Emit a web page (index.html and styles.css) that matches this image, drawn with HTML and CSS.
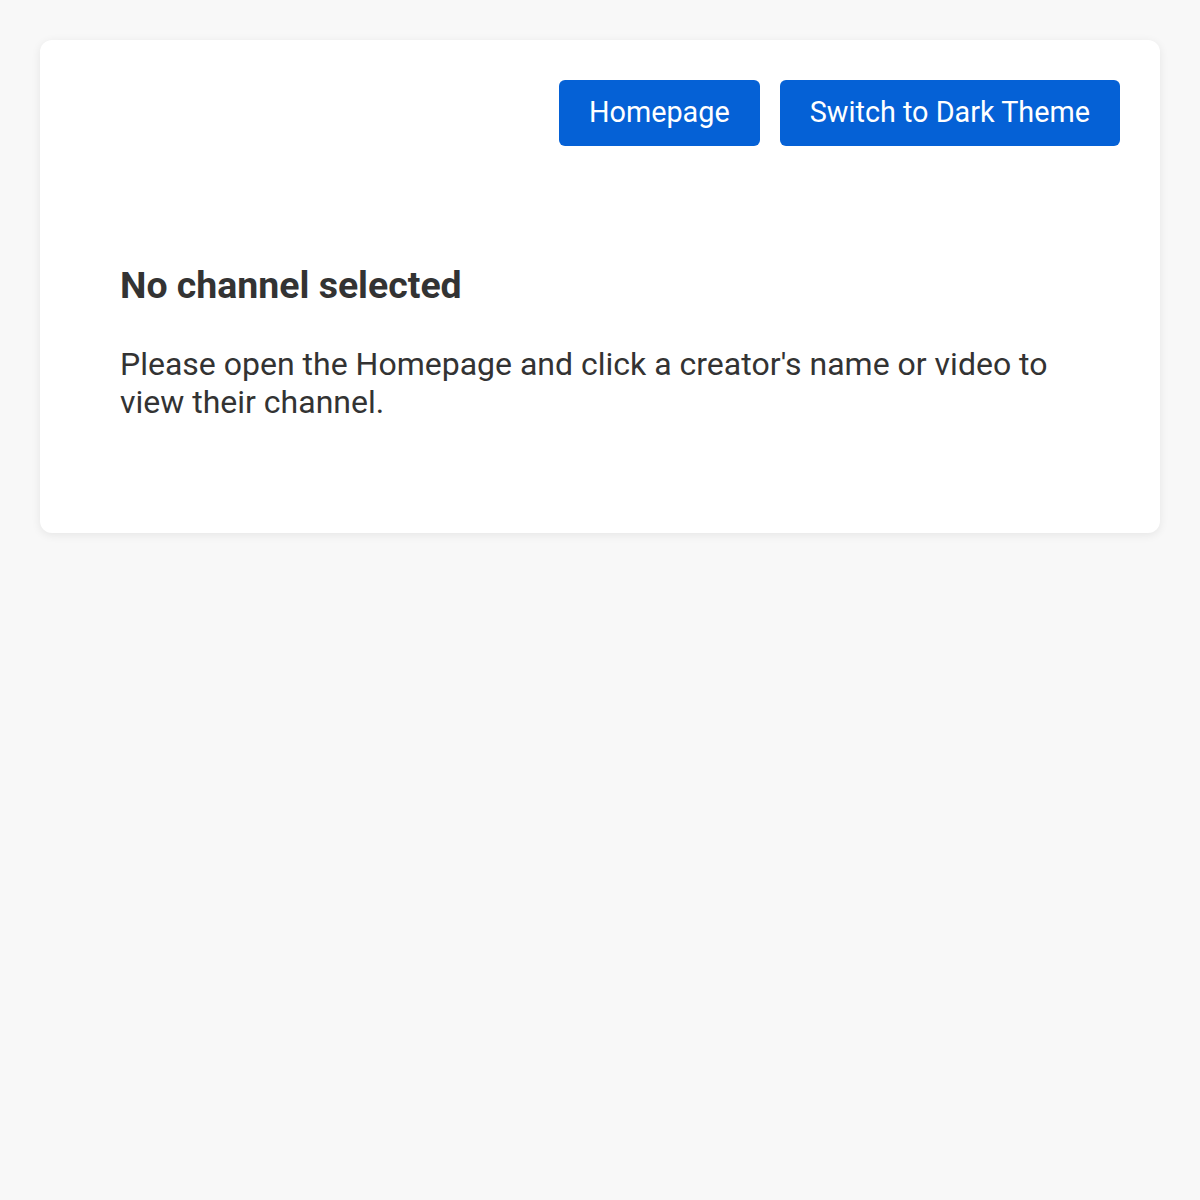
FILE: index.html
```html
<!DOCTYPE html>
<html lang="en">
<head>
<meta charset="utf-8">
<title>Channel</title>
<link rel="stylesheet" href="styles.css">
</head>
<body>
<div class="card">
  <div class="toolbar">
    <button class="btn">Homepage</button>
    <button class="btn">Switch to Dark Theme</button>
  </div>
  <div class="empty">
    <h3 class="empty-title">No channel selected</h3>
    <p class="empty-text">Please open the Homepage and click a creator's name or video to view their channel.</p>
  </div>
</div>
</body>
</html>
```
FILE: styles.css
```css
html, body {
  margin: 0;
  padding: 0;
  background: #f8f8f8;
}
body {
  padding: 40px;
  font-family: Roboto, "Liberation Sans", sans-serif;
  font-size: 32px;
  color: #333333;
}
.card {
  background: #ffffff;
  border-radius: 12px;
  box-shadow: 0 2px 10px rgba(0, 0, 0, 0.08);
  padding: 40px;
}
.toolbar {
  display: flex;
  justify-content: flex-end;
  gap: 20px;
  margin-bottom: 40px;
}
.btn {
  font-family: Roboto, "Liberation Sans", sans-serif;
  font-size: 28.8px;
  line-height: 34px;
  color: #ffffff;
  background: #0561d6;
  border: none;
  border-radius: 6px;
  padding: 15px 30px 17px;
  cursor: pointer;
}
.empty {
  padding: 40px;
}
.empty-title {
  margin: 37.44px 0;
  font-size: 37.44px;
  font-weight: 700;
  line-height: normal;
}
.empty-text {
  margin: 32px 0;
  font-size: 32px;
  line-height: normal;
}
```
